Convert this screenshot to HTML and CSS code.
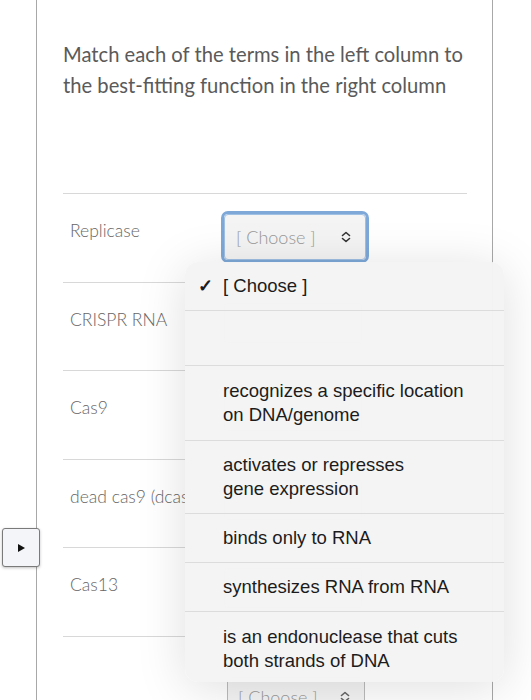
FILE: index.html
```html
<!DOCTYPE html>
<html>
<head>
<meta charset="utf-8">
<link rel="stylesheet" href="styles.css">
</head>
<body>
<div class="card">
  <p class="question">Match each of the terms in the left column to the best-fitting function in the right column</p>
  <div class="matches">
    <div class="row">
      <div class="term"><span>Replicase</span></div>
      <div class="pick"><div class="select focused"><span>[ Choose ]</span><svg class="updown" width="12" height="12" viewBox="0 0 12 12"><path d="M2.5 4.5 L6 1.5 L9.5 4.5 M2.5 7.5 L6 10.5 L9.5 7.5" fill="none" stroke="#333" stroke-width="1.6" stroke-linecap="round" stroke-linejoin="round"/></svg></div></div>
    </div>
    <div class="row">
      <div class="term"><span>CRISPR RNA</span></div>
      <div class="pick"><div class="select covered"></div></div>
    </div>
    <div class="row">
      <div class="term"><span>Cas9</span></div>
      <div class="pick"><div class="select covered"></div></div>
    </div>
    <div class="row">
      <div class="term"><span>dead cas9 (dcas9)</span></div>
      <div class="pick"><div class="select covered"></div></div>
    </div>
    <div class="row">
      <div class="term"><span>Cas13</span></div>
      <div class="pick"><div class="select covered"></div></div>
    </div>
    <div class="row last">
      <div class="term"></div>
      <div class="pick"><div class="select"><span>[ Choose ]</span><svg class="updown" width="12" height="12" viewBox="0 0 12 12"><path d="M2.5 4.5 L6 1.5 L9.5 4.5 M2.5 7.5 L6 10.5 L9.5 7.5" fill="none" stroke="#666" stroke-width="1.6" stroke-linecap="round" stroke-linejoin="round"/></svg></div></div>
    </div>
  </div>
</div>

<button class="toggle" type="button"><svg width="10" height="10" viewBox="0 0 10 10"><path d="M2 1 L9 5 L2 9 Z" fill="#111"/></svg></button>

<ul class="popup">
  <li class="opt checked"><span class="check">✓</span>[ Choose ]</li>
  <li class="opt empty"></li>
  <li class="opt dbl">recognizes a specific location<br>on DNA/genome</li>
  <li class="opt">activates or represses<br>gene expression</li>
  <li class="opt">binds only to RNA</li>
  <li class="opt">synthesizes RNA from RNA</li>
  <li class="opt lastopt">is an endonuclease that cuts<br>both strands of DNA</li>
</ul>
</body>
</html>
```

FILE: styles.css
```css
html, body {
  margin: 0;
  padding: 0;
  background: #fff;
  height: 700px;
  overflow: hidden;
}

body {
  position: relative;
  font-family: Lato, "Liberation Sans", sans-serif;
}

.card {
  margin-left: 36px;
  width: 457px;
  box-sizing: border-box;
  border-left: 1px solid #a8a8a8;
  border-right: 1px solid #a8a8a8;
  padding: 39px 26px 0 26px;
  height: 700px;
}

.question {
  margin: 0;
  font-size: 20.2px;
  line-height: 31px;
  color: #5a5a5a;
  font-weight: 400;
}

.matches {
  margin-top: 92px;
  width: 404px;
}

.row {
  display: flex;
  height: 88.5px;
  border-top: 1px solid #d8d8d8;
  box-sizing: border-box;
}

.term {
  width: 154px;
  padding-left: 7px;
  padding-top: 26px;
  font-size: 17.5px;
  color: #666;
  font-weight: 300;
  white-space: nowrap;
}

.term span {
  display: block;
  max-width: 115px;
  overflow: hidden;
}

.pick {
  padding-top: 20px;
}

.select {
  width: 138px;
  height: 40px;
  box-sizing: border-box;
  border: 1px solid #bbb;
  border-radius: 4px;
  background: #f4f4f4;
  display: flex;
  align-items: center;
  justify-content: space-between;
  padding: 0 13px 0 10px;
  font-size: 18px;
  font-weight: 300;
  color: #999;
}

.select.focused {
  width: 142px;
  height: 46px;
  border: 1px solid #9fbfe3;
  outline: 3px solid #7da8d8;
  outline-offset: 0;
  border-radius: 4px;
  padding-left: 11px;
  padding-right: 13px;
}

.row.last .pick {
  padding-top: 40px;
  padding-left: 3px;
}

.toggle {
  position: absolute;
  left: 2px;
  top: 528px;
  width: 38px;
  height: 39px;
  border: 1px solid #7a7a7a;
  border-radius: 3px;
  background: #f3f5f8;
  box-shadow: 0 1px 3px rgba(0,0,0,0.25);
  display: flex;
  align-items: center;
  justify-content: center;
  padding: 0;
}

.popup {
  position: absolute;
  left: 185px;
  top: 262px;
  width: 319px;
  margin: 0;
  padding: 0;
  list-style: none;
  background: rgba(244,244,244,0.98);
  border-radius: 13px;
  box-shadow: 0 6px 50px rgba(0,0,0,0.13);
  font-family: "Liberation Sans", Arial, sans-serif;
  font-size: 18.5px;
  color: #1c1c1c;
  overflow: hidden;
}

.opt {
  position: relative;
  padding: 12px 10px 12px 38px;
  line-height: 24px;
  border-top: 1px solid #dcdcdc;
}

.opt:first-child {
  border-top: none;
  padding-top: 12px;
  padding-bottom: 12px;
}

.opt.empty {
  height: 30px;
}

.opt.dbl {
  padding-top: 13px;
  padding-bottom: 13px;
}

.opt.lastopt {
  padding-top: 13px;
  padding-bottom: 9px;
}

.check {
  position: absolute;
  left: 13px;
  top: 12px;
  font-size: 18px;
  font-weight: 700;
}
```
